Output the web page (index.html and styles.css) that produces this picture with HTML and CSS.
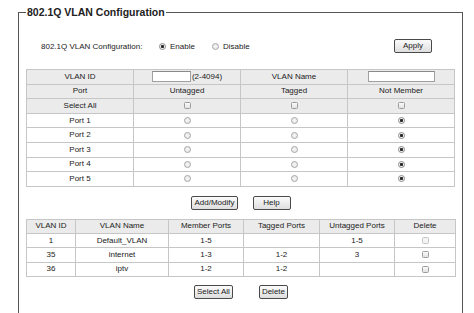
FILE: index.html
```html
<!DOCTYPE html>
<html>
<head>
<meta charset="utf-8">
<title>802.1Q VLAN Configuration</title>
<link rel="stylesheet" href="styles.css">
</head>
<body>
<fieldset class="panel">
  <legend class="title">802.1Q VLAN Configuration</legend>
  <div class="config-row">
    <span class="config-label">802.1Q VLAN Configuration:</span>
    <label class="opt opt-enable"><input class="radio" type="radio" name="en" checked><span>Enable</span></label>
    <label class="opt opt-disable"><input class="radio" type="radio" name="en"><span>Disable</span></label>
    <button class="btn btn-wide btn-apply">Apply</button>
  </div>

  <table class="grid port-table">
    <tr class="head">
      <td>VLAN ID</td>
      <td><input class="field field-id" type="text"><span>(2-4094)</span></td>
      <td>VLAN Name</td>
      <td><input class="field field-name" type="text"></td>
    </tr>
    <tr class="head">
      <td>Port</td><td>Untagged</td><td>Tagged</td><td>Not Member</td>
    </tr>
    <tr class="head">
      <td>Select All</td>
      <td><input class="check" type="checkbox"></td>
      <td><input class="check" type="checkbox"></td>
      <td><input class="check" type="checkbox"></td>
    </tr>
    <tr><td>Port 1</td><td><input class="radio" type="radio" name="p1"></td><td><input class="radio" type="radio" name="p1"></td><td><input class="radio" type="radio" name="p1" checked></td></tr>
    <tr><td>Port 2</td><td><input class="radio" type="radio" name="p2"></td><td><input class="radio" type="radio" name="p2"></td><td><input class="radio" type="radio" name="p2" checked></td></tr>
    <tr><td>Port 3</td><td><input class="radio" type="radio" name="p3"></td><td><input class="radio" type="radio" name="p3"></td><td><input class="radio" type="radio" name="p3" checked></td></tr>
    <tr><td>Port 4</td><td><input class="radio" type="radio" name="p4"></td><td><input class="radio" type="radio" name="p4"></td><td><input class="radio" type="radio" name="p4" checked></td></tr>
    <tr><td>Port 5</td><td><input class="radio" type="radio" name="p5"></td><td><input class="radio" type="radio" name="p5"></td><td><input class="radio" type="radio" name="p5" checked></td></tr>
  </table>

  <div class="actions actions-top">
    <button class="btn">Add/Modify</button>
    <button class="btn btn-wide">Help</button>
  </div>

  <table class="grid vlan-table">
    <colgroup>
      <col class="c-id"><col class="c-name"><col class="c-member"><col class="c-tagged"><col class="c-untagged"><col class="c-delete">
    </colgroup>
    <tr class="head">
      <td>VLAN ID</td><td>VLAN Name</td><td>Member Ports</td><td>Tagged Ports</td><td>Untagged Ports</td><td>Delete</td>
    </tr>
    <tr><td>1</td><td>Default_VLAN</td><td>1-5</td><td></td><td>1-5</td><td><input class="check" type="checkbox" disabled></td></tr>
    <tr><td>35</td><td>internet</td><td>1-3</td><td>1-2</td><td>3</td><td><input class="check" type="checkbox"></td></tr>
    <tr><td>36</td><td>iptv</td><td>1-2</td><td>1-2</td><td></td><td><input class="check" type="checkbox"></td></tr>
  </table>

  <div class="actions actions-bottom">
    <button class="btn">Select All</button>
    <button class="btn">Delete</button>
  </div>
</fieldset>
</body>
</html>
```

FILE: styles.css
```css
html, body {
  margin: 0;
  padding: 0;
  background: #ffffff;
}

body {
  font-family: "Liberation Sans", Arial, sans-serif;
  font-size: 8px;
  color: #222222;
}

.panel {
  margin: 5px 0 0 18px;
  padding: 0 6px 20px 7px;
  width: 443px;
  box-sizing: border-box;
  border: 1px solid #555555;
  border-radius: 0;
  min-height: 330px;
}

.title {
  padding: 0 1px;
  margin-left: 0;
  font-size: 10.5px;
  line-height: 14px;
  font-weight: bold;
  color: #222222;
}

.config-row {
  display: flex;
  align-items: center;
  height: 14px;
  margin-top: 20px;
  padding-left: 15px;
}

.config-label {
  width: 118px;
}

.opt {
  display: flex;
  align-items: center;
  gap: 4px;
}

.opt-disable {
  margin-left: 17px;
}

.radio {
  -webkit-appearance: none;
  appearance: none;
  width: 7px;
  height: 7px;
  margin: 0;
  border: 1px solid #a8a8a8;
  border-radius: 50%;
  background: radial-gradient(circle, #f6f6f6 0, #e4e4e4 100%);
  vertical-align: middle;
  box-sizing: border-box;
}

.radio:checked {
  background: radial-gradient(circle, #2a2a2a 0, #2a2a2a 1.3px, #f2f2f2 1.9px);
  border-color: #8c8c8c;
}

.check {
  -webkit-appearance: none;
  appearance: none;
  width: 7px;
  height: 7px;
  margin: 0;
  border: 1px solid #9c9c9c;
  border-radius: 1.5px;
  background: linear-gradient(#fbfbfb, #e2e2e2);
  vertical-align: middle;
  box-sizing: border-box;
}

.check:disabled {
  border-color: #c4c4c4;
  background: #f4f4f4;
}

.grid {
  border-collapse: collapse;
  table-layout: fixed;
  width: 429px;
  text-align: center;
}

.grid td {
  border: 1px solid #c6c6c6;
  padding: 0;
  line-height: 10px;
  vertical-align: middle;
  white-space: nowrap;
}

.grid .head td {
  background: #ebebeb;
}

.port-table {
  margin-top: 16px;
}

.port-table tr {
  height: 14.6px;
}

.field {
  height: 11px;
  margin: 0;
  padding: 0;
  border: 1px solid #a0a0a0;
  border-top-color: #8a8a8a;
  background: #ffffff;
  box-sizing: border-box;
  vertical-align: middle;
}

.field-id {
  width: 39px;
}

.field-id + span {
  margin-left: 1px;
}

.field-name {
  width: 67px;
}

.actions {
  display: flex;
  justify-content: center;
}

.actions-top {
  margin-top: 9px;
  gap: 15px;
}

.actions-bottom {
  margin-top: 8px;
  gap: 26px;
}

.btn {
  height: 14px;
  padding: 0 2px;
  margin: 0;
  font-family: "Liberation Sans", Arial, sans-serif;
  font-size: 8px;
  line-height: 12px;
  color: #222222;
  border: 1px solid #4a4a4a;
  border-radius: 2px;
  background: linear-gradient(#fbfbfb, #dedede);
  box-sizing: border-box;
}

.btn-wide {
  min-width: 38px;
}

.config-row .btn-apply {
  margin-left: auto;
  margin-right: 24px;
}

.vlan-table {
  margin-top: 9px;
}

.vlan-table tr {
  height: 14.3px;
}

.c-id { width: 49px; }
.c-name { width: 93px; }
.c-member { width: 75px; }
.c-tagged { width: 76px; }
.c-untagged { width: 75px; }
.c-delete { width: 61px; }
```
